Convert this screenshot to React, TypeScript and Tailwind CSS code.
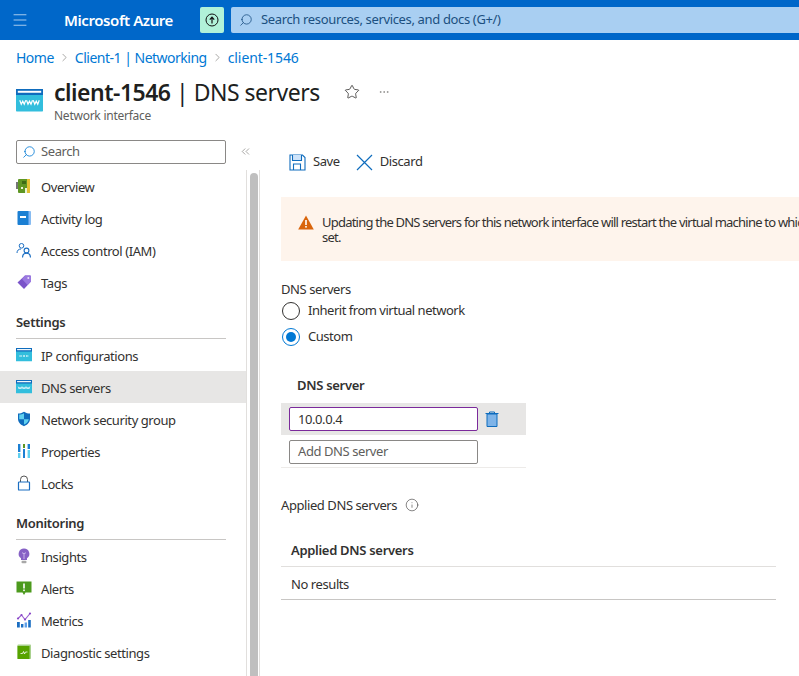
import { ChevronRight, ChevronsLeft, Ellipsis, Info, Menu, Search, Star } from 'lucide-react';
import type { ReactNode } from 'react';

function WwwIcon({ size = 16, label = 'www' }: { size?: number; label?: string }) {
  return (
    <svg width={size} height={(size * 15) / 18} viewBox="0 0 18 15">
      <rect x="0" y="0" width="18" height="15" rx="0.5" fill="#32bedd" />
      <rect x="0" y="0" width="18" height="4" fill="#0f6cbd" />
      <rect x="1.2" y="1.2" width="15.6" height="1.3" fill="#ffffff" />
      {label === 'www' ? (
        <path d="M2.5 7.5l1 2.6 1-2 1 2 1-2.6M7 7.5l1 2.6 1-2 1 2 1-2.6M11.5 7.5l1 2.6 1-2 1 2 1-2.6" fill="none" stroke="#fff" strokeWidth="0.8" />
      ) : (
        <path d="M4 9h2.5M7.8 9h2.5M11.5 9H14" stroke="#fff" strokeWidth="1.6" strokeDasharray="0.9 0.5" />
      )}
    </svg>
  );
}

const icons: Record<string, ReactNode> = {
  overview: (
    <svg width="16" height="16" viewBox="0 0 16 16">
      <rect x="0" y="4" width="2" height="7" fill="#767676" />
      <rect x="2" y="1" width="12" height="14" rx="1" fill="#5e9624" />
      <rect x="11" y="1" width="3" height="14" fill="#e3c033" />
      <rect x="6" y="3" width="4" height="3" fill="#3c6b16" />
      <rect x="5" y="9" width="2" height="2" fill="#e8f3d6" />
      <rect x="9" y="10" width="2" height="5" fill="#e8f3d6" />
    </svg>
  ),
  activity: (
    <svg width="16" height="16" viewBox="0 0 16 16">
      <rect x="1.5" y="1" width="13" height="14" rx="1" fill="#1b7fd3" />
      <rect x="12.5" y="1" width="2" height="14" fill="#83b9f9" />
      <rect x="4" y="6" width="6" height="2" fill="#ffffff" />
    </svg>
  ),
  iam: (
    <svg width="16" height="16" viewBox="0 0 16 16" fill="none">
      <circle cx="5.5" cy="3.8" r="2.3" stroke="#1b6ec2" strokeWidth="1" />
      <path d="M1 11c0-2.5 1.5-4 4-4" stroke="#1b6ec2" strokeWidth="1" />
      <circle cx="10.5" cy="8.5" r="2.4" stroke="#1b6ec2" strokeWidth="1.1" />
      <path d="M6.5 15.5c0-2.6 1.6-4.2 4-4.2s4 1.6 4 4.2" stroke="#1b6ec2" strokeWidth="1.1" />
    </svg>
  ),
  tags: (
    <svg width="16" height="16" viewBox="0 0 16 16">
      <path d="M9 1.5h5a1 1 0 0 1 1 1v5L8 15 1.5 8.5z" fill="#7a54c9" />
      <path d="M9 1.5h5a1 1 0 0 1 1 1v5L11.5 11 6 5z" fill="#9a78e0" />
      <circle cx="12.3" cy="4" r="1" fill="#e9e1f8" />
    </svg>
  ),
  shield: (
    <svg width="16" height="16" viewBox="0 0 16 16">
      <path d="M8 .8c2 1.4 4 1.8 6 1.8v5.2c0 3.6-2.6 6-6 7.4-3.4-1.4-6-3.8-6-7.4V2.6c2 0 4-.4 6-1.8z" fill="#0f6cbd" />
      <path d="M8 2.2v6H3.2V3.6c1.8 0 3.3-.4 4.8-1.4zM8 8.2h4.8c-.3 2.6-2.3 4.2-4.8 5.4z" fill="#5fd0ef" />
    </svg>
  ),
  properties: (
    <svg width="16" height="16" viewBox="0 0 16 16">
      <rect x="2" y="1" width="2.4" height="8" fill="#1b7fd3" />
      <rect x="2" y="10" width="2.4" height="5" fill="#5fd0ef" />
      <rect x="7" y="1" width="2" height="4" fill="#5e9624" />
      <rect x="7" y="6" width="2" height="9" fill="#1b7fd3" />
      <rect x="11.6" y="1" width="2.4" height="5" fill="#1b7fd3" />
      <rect x="11.6" y="7" width="2.4" height="8" fill="#5fd0ef" />
    </svg>
  ),
  locks: (
    <svg width="16" height="16" viewBox="0 0 16 16" fill="none">
      <path d="M4.5 7V4.5a3.5 3.5 0 0 1 7 0V7" stroke="#555" strokeWidth="1" />
      <rect x="2.5" y="7" width="11" height="8" rx="0.6" stroke="#1b6ec2" strokeWidth="1.2" />
    </svg>
  ),
  insights: (
    <svg width="16" height="16" viewBox="0 0 16 16">
      <path d="M8 0.5a5.3 5.3 0 0 1 3 9.7V12H5v-1.8A5.3 5.3 0 0 1 8 0.5z" fill="#8661c5" />
      <path d="M6 4.5c1 1.4 3 1.4 4 0M8 5.5V11" stroke="#d9c9f3" strokeWidth="0.8" fill="none" />
      <rect x="5.5" y="12.8" width="5" height="2.4" rx="1" fill="#a8a8a8" />
    </svg>
  ),
  alerts: (
    <svg width="16" height="16" viewBox="0 0 16 16">
      <path d="M0.5 1.5h15v11H9.5L8 15l-1.5-2.5h-6z" fill="#4c9a1d" />
      <rect x="7.2" y="3.5" width="1.6" height="5" fill="#fff" />
      <rect x="7.2" y="9.5" width="1.6" height="1.6" fill="#fff" />
    </svg>
  ),
  metrics: (
    <svg width="16" height="16" viewBox="0 0 16 16">
      <rect x="1" y="10" width="2.8" height="5.5" fill="#1b6ec2" />
      <rect x="5" y="12" width="2.4" height="3.5" fill="#1b6ec2" />
      <rect x="8.6" y="10.5" width="2.4" height="5" fill="#5fa0e8" />
      <rect x="12.2" y="8" width="2.6" height="7.5" fill="#1b6ec2" />
      <path d="M2 6.5 5.5 3 9 7.5 14 1.5" fill="none" stroke="#9b5fd1" strokeWidth="1.1" />
      <circle cx="2" cy="6.5" r="1.1" fill="#8a47c8" />
      <circle cx="5.5" cy="3" r="1.1" fill="#8a47c8" />
      <circle cx="9" cy="7.5" r="1.1" fill="#8a47c8" />
      <circle cx="14" cy="1.5" r="1.1" fill="#8a47c8" />
    </svg>
  ),
  diagnostic: (
    <svg width="16" height="16" viewBox="0 0 16 16">
      <rect x="1.5" y="0.5" width="13.5" height="14.5" rx="0.8" fill="#a9d18e" />
      <rect x="1.5" y="2" width="12" height="13" fill="#57a300" />
      <path d="M4.5 9.5h2l1-2 1 2.5 1-2h2" fill="none" stroke="#fff" strokeWidth="0.8" />
    </svg>
  ),
};

function NavItem({ icon, label, active }: { icon: ReactNode; label: string; active?: boolean }) {
  return (
    <div className={`flex h-8 items-center gap-[9px] pl-4 ${active ? 'bg-[#e7e6e5]' : ''}`}>
      <span className="flex w-4 shrink-0 justify-center">{icon}</span>
      <span className="pt-1 text-[13px] text-[#323130]">{label}</span>
    </div>
  );
}

function NavHeading({ label }: { label: string }) {
  return (
    <div className="mt-[15px] mr-5 ml-4 border-b border-[#c8c6c4] pb-[7px] text-[13px] leading-[18px] font-semibold tracking-[-0.3px] text-[#323130]">
      {label}
    </div>
  );
}

function Sidebar() {
  return (
    <aside className="w-[246px] shrink-0">
      <div className="mt-[14px] mr-5 ml-4 flex h-[24px] items-center gap-[5px] rounded-[2px] border border-[#8a8886] pl-[5px]">
        <Search size={14} strokeWidth={1.4} className="-scale-x-100 text-[#0078d4]" />
        <span className="text-[13px] text-[#605e5c]">Search</span>
      </div>
      <div className="mt-[6px]">
        <NavItem icon={icons.overview} label="Overview" />
        <NavItem icon={icons.activity} label="Activity log" />
        <NavItem icon={icons.iam} label="Access control (IAM)" />
        <NavItem icon={icons.tags} label="Tags" />
      </div>
      <NavHeading label="Settings" />
      <NavItem icon={<WwwIcon label="ip" />} label="IP configurations" />
      <NavItem icon={<WwwIcon />} label="DNS servers" active />
      <NavItem icon={icons.shield} label="Network security group" />
      <NavItem icon={icons.properties} label="Properties" />
      <NavItem icon={icons.locks} label="Locks" />
      <NavHeading label="Monitoring" />
      <NavItem icon={icons.insights} label="Insights" />
      <NavItem icon={icons.alerts} label="Alerts" />
      <NavItem icon={icons.metrics} label="Metrics" />
      <NavItem icon={icons.diagnostic} label="Diagnostic settings" />
    </aside>
  );
}

function Radio({ checked, label }: { checked?: boolean; label: string }) {
  return (
    <div className="flex h-[26px] items-center gap-2 pl-[1px]">
      <span className={`flex h-[18px] w-[18px] items-center justify-center rounded-full border ${checked ? 'border-[#0078d4]' : 'border-[#323130]'}`}>
        {checked && <span className="h-[10px] w-[10px] rounded-full bg-[#0078d4]" />}
      </span>
      <span className="text-[13px] tracking-[-0.48px] text-[#323130]">{label}</span>
    </div>
  );
}

export default function App() {
  return (
    <div className="h-[676px] w-[799px] overflow-hidden bg-white font-['Noto_Sans',sans-serif] tracking-[-0.42px]">
      {/* Top bar */}
      <header className="flex h-10 items-center bg-[#0067c9]">
        <Menu size={18} strokeWidth={1.2} className="ml-[11px] text-[#b9d6f2]" />
        <span className="ml-[35px] w-[136px] text-[15px] font-semibold text-white">Microsoft Azure</span>
        <div className="flex h-[26px] w-[24px] items-center justify-center rounded-[2px] bg-[#b1f2d9]">
          <svg width="14" height="14" viewBox="0 0 14 14" fill="none">
            <circle cx="7" cy="7" r="6" stroke="#111" strokeWidth="1" />
            <path d="M7 10.5V4.5M4.8 6.6 7 4.2l2.2 2.4" stroke="#111" strokeWidth="1.2" />
          </svg>
        </div>
        <div className="ml-[7px] flex h-[26px] flex-1 items-center rounded-l-[2px] bg-[#a9cff2] pl-[8px]">
          <Search size={14} strokeWidth={1.3} className="-scale-x-100 text-[#14497c]" />
          <span className="ml-[8px] text-[13px] tracking-[-0.35px] text-[#1b4f80]">Search resources, services, and docs (G+/)</span>
        </div>
      </header>

      {/* Breadcrumb */}
      <nav className="mt-[8px] flex h-[18px] items-center pl-4 text-[14px] tracking-[-0.5px] text-[#0078d4]">
        <span>Home</span>
        <ChevronRight size={13} strokeWidth={1} className="mx-[4px] text-[#605e5c]" />
        <span>Client-1 | Networking</span>
        <ChevronRight size={13} strokeWidth={1} className="mx-[4px] text-[#605e5c]" />
        <span className="tracking-[-0.1px]">client-1546</span>
      </nav>

      {/* Page title */}
      <div className="mt-[9px] flex pl-4">
        <div className="mt-[14px]">
          <WwwIcon size={27} />
        </div>
        <div className="ml-[11px]">
          <div className="flex h-[34px] items-center">
            <h1 className="w-[284px] text-[23px] tracking-[-0.5px] whitespace-nowrap text-[#201f1e]">
              <span className="font-semibold">client-1546</span> | DNS servers
            </h1>
            <Star size={16} strokeWidth={1.2} className="ml-[6px] text-[#323130]" />
            <Ellipsis size={12} strokeWidth={1} className="ml-[18px] text-[#605e5c]" />
          </div>
          <div className="text-[12px] leading-[14px] tracking-[-0.25px] text-[#605e5c]">Network interface</div>
        </div>
      </div>

      <div className="mt-[3px] flex">
        <Sidebar />

        {/* Scrollbar */}
        <div className="relative w-[14px] shrink-0 pt-[44px]">
          <ChevronsLeft size={13} strokeWidth={1} className="absolute top-[19px] -left-[7px] text-[#605e5c]" />
          <div className="h-[520px] w-[14px] border-x border-[#e1dfdd] pt-[3px] pl-[3px]">
            <div className="h-full w-[8px] rounded-t-[4px] bg-[#bfbfbf]" />
          </div>
        </div>

        {/* Content */}
        <main className="ml-[21px] flex-1">
          <div className="mt-[24px] flex h-[24px] items-center text-[13px] text-[#323130]">
            <svg width="17" height="17" viewBox="0 0 17 17" fill="none" className="ml-[8px]">
              <path d="M1 1h12.5L16 3.5V16H1z" stroke="#0f6cbd" strokeWidth="1.1" />
              <path d="M3.5 1v5.5h9V1" stroke="#0f6cbd" strokeWidth="1.1" fill="#cfe4fa" />
              <path d="M4.5 16v-6h7v6" stroke="#0f6cbd" strokeWidth="1.1" />
            </svg>
            <span className="ml-[7px]">Save</span>
            <svg width="17" height="17" viewBox="0 0 17 17" fill="none" className="ml-[16px]">
              <path d="M1 1l15 15M16 1 1 16" stroke="#0f6cbd" strokeWidth="1.2" />
            </svg>
            <span className="ml-[7px]">Discard</span>
          </div>

          <div className="mt-[23px] flex h-[64px] w-[560px] bg-[#fef4ec] pt-[18px] pl-[17px]">
            <svg width="16" height="15" viewBox="0 0 16 15" className="shrink-0">
              <path d="M8 0.5 15.8 14.5H.2z" fill="#d9650c" />
              <rect x="7.2" y="5" width="1.6" height="5" fill="#fff" />
              <rect x="7.2" y="11" width="1.6" height="1.6" fill="#fff" />
            </svg>
            <p className="ml-[8px] text-[13px] leading-[15px] tracking-[-0.78px] whitespace-nowrap text-[#323130]">
              Updating the DNS servers for this network interface will restart the virtual machine to which it is attached.
              <br />
              set.
            </p>
          </div>

          <div className="mt-[20px] text-[13px] leading-[16px] text-[#323130]">DNS servers</div>
          <div className="mt-[1px]">
            <Radio label="Inherit from virtual network" />
            <Radio checked label="Custom" />
          </div>

          <div className="mt-[19px] w-[245px]">
            <div className="h-[34px] pt-[7px] pl-4 text-[13px] leading-[18px] font-semibold tracking-[-0.3px] text-[#323130]">DNS server</div>
            <div className="flex h-8 items-center bg-[#e7e6e5] pl-2">
              <div className="flex h-[24px] w-[189px] items-center rounded-[2px] border border-[#7b2a9b] bg-white pt-[2px] pl-2 text-[13px] text-[#323130]">10.0.0.4</div>
              <svg width="14" height="16" viewBox="0 0 14 16" className="ml-[7px]" fill="none">
                <path d="M4.5 2.5V1h5v1.5M.5 2.5h13" stroke="#0f6cbd" strokeWidth="1" />
                <path d="M2 3h10v12.5H2z" fill="#7fb4e8" stroke="#0f6cbd" strokeWidth="1" />
              </svg>
            </div>
            <div className="h-[33px] border-b border-[#edebe9] pt-[5px] pl-2">
              <div className="flex h-[24px] w-[189px] items-center rounded-[2px] border border-[#8a8886] pl-2 text-[13px] text-[#605e5c]">Add DNS server</div>
            </div>
          </div>

          <div className="mt-[28px] flex items-center text-[13px] leading-[18px] text-[#323130]">
            Applied DNS servers
            <Info size={14} strokeWidth={1} className="ml-[8px] text-[#323130]" />
          </div>

          <div className="mt-[27px] w-[495px]">
            <div className="h-[26px] border-b border-[#e1dfdd] pl-[10px] text-[13px] leading-[18px] font-semibold tracking-[-0.3px] text-[#323130]">Applied DNS servers</div>
            <div className="flex h-[33px] items-center border-b border-[#c8c6c4] pt-[3px] pl-[10px] text-[13px] text-[#323130]">No results</div>
          </div>
        </main>
      </div>
    </div>
  );
}
